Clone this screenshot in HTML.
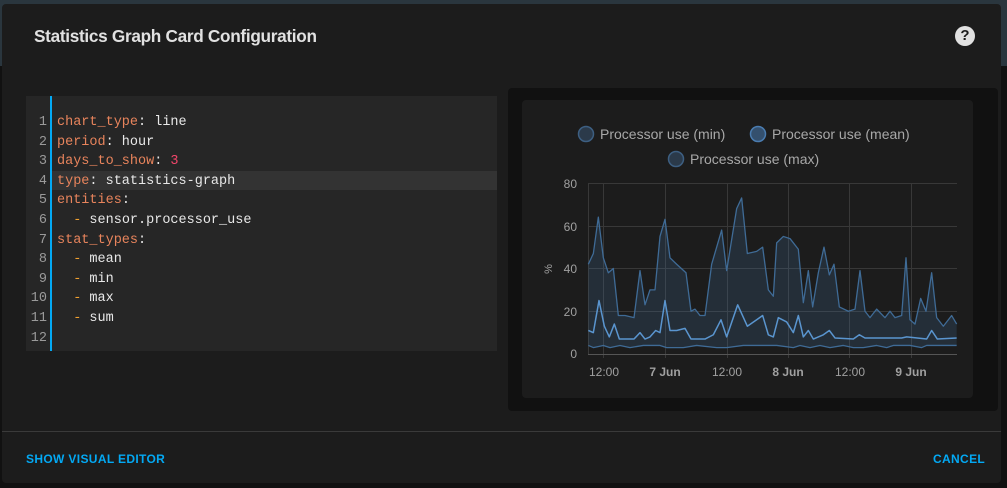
<!DOCTYPE html>
<html><head><meta charset="utf-8"><style>
*{margin:0;padding:0;box-sizing:border-box}
body{width:1007px;height:488px;overflow:hidden;background:#111;font-family:"Liberation Sans",sans-serif;position:relative}
.topbg{position:absolute;left:0;top:0;width:1007px;height:66px;background:#2a363e}
.dlg{position:absolute;left:2px;top:4px;width:999px;height:479px;background:#1c1c1c;border-radius:4px}
.title{position:absolute;left:34px;top:26px;color:#e1e1e1;font-weight:bold;font-size:17.2px;letter-spacing:-0.3px}
.help{position:absolute;left:955px;top:26px;width:20px;height:20px;border-radius:50%;background:#e1e1e1;color:#1c1c1c;font-weight:bold;font-size:15px;text-align:center;line-height:20px}
.editor{position:absolute;left:26px;top:96px;width:471px;height:255px;background:#262626}
.gut{position:absolute;left:0;top:0;width:24px;height:255px;background:#262626}
.bar{position:absolute;left:24px;top:0;width:2px;height:255px;background:#03a9f4}
.hl{position:absolute;left:26px;top:75px;width:445px;height:19px;background:#333}
.code{position:absolute;left:0;top:17px;font-family:"Liberation Mono",monospace;font-size:13.5px;line-height:19.6px;color:#e8e8e8;white-space:pre}
.ln{display:inline-block;width:21px;text-align:right;color:#9a9a9a;margin-right:10px}
.k{color:#e8845c}.n{color:#f2466a}.d{color:#f0a030}
.prev{position:absolute;left:508px;top:88px;width:490px;height:323px;background:#111;border-radius:4px}
.card{position:absolute;left:522px;top:100px;width:451px;height:298px;background:#1c1c1c;border-radius:4px}
.div{position:absolute;left:2px;top:431px;width:999px;height:1px;background:#3a3a3a}
.btn{position:absolute;top:452px;color:#03a9f4;font-weight:bold;font-size:12px;letter-spacing:0.35px}
svg{position:absolute;left:0;top:0}
</style></head><body>
<div class="topbg"></div>
<div class="dlg"></div>
<div class="title">Statistics Graph Card Configuration</div>
<div class="help">?</div>
<div class="editor">
<div class="gut"></div><div class="bar"></div><div class="hl"></div>
<div class="code"><span class="ln">1</span><span class="k">chart_type</span>: line
<span class="ln">2</span><span class="k">period</span>: hour
<span class="ln">3</span><span class="k">days_to_show</span>: <span class="n">3</span>
<span class="ln">4</span><span class="k">type</span>: statistics-graph
<span class="ln">5</span><span class="k">entities</span>:
<span class="ln">6</span>  <span class="d">-</span> sensor.processor_use
<span class="ln">7</span><span class="k">stat_types</span>:
<span class="ln">8</span>  <span class="d">-</span> mean
<span class="ln">9</span>  <span class="d">-</span> min
<span class="ln">10</span>  <span class="d">-</span> max
<span class="ln">11</span>  <span class="d">-</span> sum
<span class="ln">12</span></div>
</div>
<div class="prev"></div>
<div class="card"></div>
<svg width="1007" height="488" font-family="Liberation Sans, sans-serif">
<g fill="#2b3a4a" stroke="#3d5f82" stroke-width="1.5">
<circle cx="586" cy="134" r="7.5"/><circle cx="758" cy="134" r="7.5" fill="#34506e" stroke="#4a7cb0"/><circle cx="676" cy="159" r="7.5"/>
</g>
<g fill="#a8a8a8" font-size="14">
<text x="600" y="139">Processor use (min)</text>
<text x="772" y="139">Processor use (mean)</text>
<text x="690" y="164">Processor use (max)</text>
</g>
<g stroke="#383838" stroke-width="1">
<line x1="588" y1="183.5" x2="957" y2="183.5"/><line x1="588" y1="226.5" x2="957" y2="226.5"/><line x1="588" y1="268.5" x2="957" y2="268.5"/><line x1="588" y1="311.5" x2="957" y2="311.5"/>
<line x1="603.5" y1="183" x2="603.5" y2="358"/><line x1="665.5" y1="183" x2="665.5" y2="358"/><line x1="727.5" y1="183" x2="727.5" y2="358"/><line x1="788.5" y1="183" x2="788.5" y2="358"/><line x1="849.5" y1="183" x2="849.5" y2="358"/><line x1="911.5" y1="183" x2="911.5" y2="358"/>
<line x1="588.5" y1="183" x2="588.5" y2="354"/>
</g>
<line x1="588" y1="354.5" x2="957" y2="354.5" stroke="#555"/>
<g fill="#a0a0a0" font-size="12" text-anchor="end">
<text x="577" y="188">80</text><text x="577" y="231">60</text><text x="577" y="273">40</text><text x="577" y="316">20</text><text x="577" y="358">0</text>
</g>
<text x="0" y="0" fill="#a0a0a0" font-size="11" transform="translate(552,269) rotate(-90)" text-anchor="middle">%</text>
<g fill="#a0a0a0" font-size="12" text-anchor="middle" font-weight="bold">
<text x="604" y="376" font-weight="normal">12:00</text><text x="665" y="376">7 Jun</text><text x="727" y="376" font-weight="normal">12:00</text><text x="788" y="376">8 Jun</text><text x="850" y="376" font-weight="normal">12:00</text><text x="911" y="376">9 Jun</text>
</g>
<g transform="translate(510,354) scale(0.33333,-2.1375)" fill="none" stroke-linejoin="round">
<polygon fill="#44739e" fill-opacity="0.22" stroke="none" points="235,42 250,47 265,64 280,45 295,38 310,40 325,18 345,18 372,17 390,39 405,23 420,30 435,30 450,55 465,63 480,45 500,42 528,38 543,20 555,21 570,18 585,18 605,42 635,58 650,39 680,68 695,73 712,47 740,48 758,50 775,30 790,27 800,52 820,55 840,54 865,49 880,24 895,39 908,22 925,38 942,50 958,37 972,42 988,22 1015,20 1035,21 1050,39 1065,20 1080,17 1100,21 1125,17 1140,20 1155,17 1175,18 1188,45 1200,16 1215,14 1232,26 1248,20 1265,38 1280,17 1300,13 1325,18 1340,14 1340,4 1300,4 1250,4 1235,3 1200,4 1150,4 1130,3 1100,4 1060,3 1030,3 1000,4 960,3 930,4 900,3 870,4 850,3 800,4 750,4 700,4 650,3 620,3 560,4 520,3 470,3 450,4 400,4 360,3 330,4 300,3 280,4 250,3 235,4"/>
<polyline stroke="#3f6b96" stroke-width="1.3" vector-effect="non-scaling-stroke" points="235,42 250,47 265,64 280,45 295,38 310,40 325,18 345,18 372,17 390,39 405,23 420,30 435,30 450,55 465,63 480,45 500,42 528,38 543,20 555,21 570,18 585,18 605,42 635,58 650,39 680,68 695,73 712,47 740,48 758,50 775,30 790,27 800,52 820,55 840,54 865,49 880,24 895,39 908,22 925,38 942,50 958,37 972,42 988,22 1015,20 1035,21 1050,39 1065,20 1080,17 1100,21 1125,17 1140,20 1155,17 1175,18 1188,45 1200,16 1215,14 1232,26 1248,20 1265,38 1280,17 1300,13 1325,18 1340,14"/>
<polyline stroke="#3f6b96" stroke-width="1.3" vector-effect="non-scaling-stroke" points="235,4 250,3 280,4 300,3 330,4 360,3 400,4 450,4 470,3 520,3 560,4 620,3 650,3 700,4 750,4 800,4 850,3 870,4 900,3 930,4 960,3 1000,4 1030,3 1060,3 1100,4 1130,3 1150,4 1200,4 1235,3 1250,4 1300,4 1340,4"/>
<polyline stroke="#5a95cf" stroke-width="1.5" vector-effect="non-scaling-stroke" points="235,11 250,10 267,25 283,13 298,8 313,14 328,7 372,7 390,10 405,7 420,8 437,11 450,10 465,25 480,11 500,11 525,12 543,7 585,7 610,9 633,16 650,8 683,23 712,13 740,16 758,18 775,9 790,8 805,17 830,15 850,10 865,18 880,8 895,11 910,7 940,9 958,11 975,7.5 1030,7 1048,9 1065,7.5 1175,7.5 1190,8 1250,7 1265,11 1282,7 1340,7.5"/>
</g>
</svg>
<div class="div"></div>
<div class="btn" style="left:26px">SHOW VISUAL EDITOR</div>
<div class="btn" style="left:933px">CANCEL</div>
</body></html>
